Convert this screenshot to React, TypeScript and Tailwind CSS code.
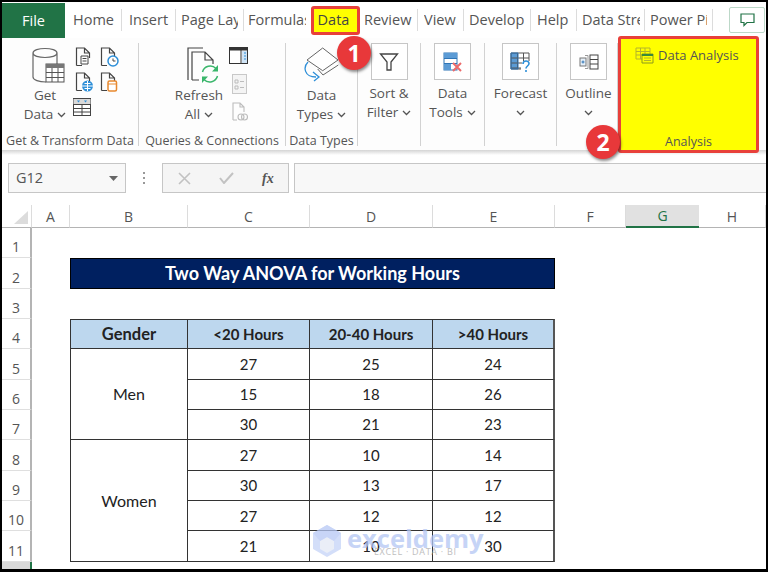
import type { ReactNode } from "react";

const Chevron = ({ className = "" }: { className?: string }) => (
  <svg width="9" height="6" viewBox="0 0 9 6" className={className} fill="none" stroke="#555" strokeWidth="1.3">
    <path d="M1 1l3.5 3.5L8 1" />
  </svg>
);

const Doc = ({ children, stroke = "#444" }: { children?: ReactNode; stroke?: string }) => (
  <svg width="19" height="20" viewBox="0 0 19 20" fill="none">
    <path d="M1.5 18.5V1h8l5 5v5M1.5 18.5H7M9.5 1v5h5" stroke={stroke} strokeWidth="1.2" />
    {children}
  </svg>
);

const GetDataIcon = () => (
  <svg width="33" height="37" viewBox="0 0 33 37" fill="none">
    <path d="M1 6c0-6 24-6 24 0v11M1 6c0 6 24 6 24 0M1 6v24c0 3 6 5 13 5" stroke="#666" strokeWidth="1.2" />
    <rect x="14" y="17" width="18" height="18" fill="#fff" stroke="#555" />
    <path d="M14 17h18v4H14z" fill="#777" />
    <path d="M14 25.500h18M14 30.500h18M20 21v14M26 21v14" stroke="#555" />
  </svg>
);

const TableIcon = () => (
  <svg width="18" height="18" viewBox="0 0 18 18" fill="none">
    <rect x=".5" y=".5" width="17" height="17" fill="#fff" stroke="#444" />
    <path d="M.5 1h17v5H.5z" fill="#d9d9d9" />
    <path d="M4 2.500h3L5.500 4.500zM11 2.500h3l-1.500 2z" fill="#2e8fd8" />
    <path d="M.5 6.500h17M.5 10.500h17M.5 14h17M9 6.500V18" stroke="#444" />
  </svg>
);

const RefreshIcon = () => (
  <svg width="33" height="37" viewBox="0 0 33 37" fill="none">
    <path d="M1 33V1h15" stroke="#444" strokeWidth="1.2" />
    <path d="M5 33V5h13l8 8v4M18 5v8h8M5 33h7" stroke="#444" strokeWidth="1.2" />
    <path d="M15.500 25A8 8 0 0 1 29 21.500" stroke="#3ab66b" strokeWidth="1.5" />
    <path d="M30.500 29A8 8 0 0 1 17 32.500" stroke="#3ab66b" strokeWidth="1.5" />
    <path d="M31 18v6.500h-6zM15 36v-6.500h6z" fill="#3ab66b" />
  </svg>
);

const DataTypesIcon = () => (
  <svg width="36" height="36" viewBox="0 0 36 36" fill="none">
    <path d="M18.700 1L34 13 18.700 23.700 3 13z" fill="#fff" stroke="#666" />
    <path d="M13.700 22l5.300 6 15.300-10" stroke="#666" />
    <path d="M4 15C-1 20 0 30 12 30" stroke="#2e8fd8" strokeWidth="1.3" />
    <path d="M9 25l6 5-5 4" stroke="#2e8fd8" strokeWidth="1.3" />
  </svg>
);

const SquareBtn = ({ children }: { children: ReactNode }) => (
  <div className="w-[37px] h-[37px] border border-[#c6c6c6] bg-white flex items-center justify-center">{children}</div>
);

const BigLabel = ({ children }: { children: ReactNode }) => (
  <div className="flex items-center justify-center gap-[4px] h-[19px] text-[13.5px] text-[#555] whitespace-nowrap">{children}</div>
);

const Group = ({ className, label, children, top = "pt-[5px]" }: { className: string; label: string; children: ReactNode; top?: string }) => (
  <div className={`flex shrink-0 ${className}`}>
    <div className="flex-1 min-w-0 flex flex-col">
      <div className={`h-[92px] ${top}`}>{children}</div>
      <div className="h-[20px] pt-[1px] text-center text-[12.5px] leading-[20px] text-[#555] whitespace-nowrap">{label}</div>
    </div>
    <div className="w-px h-[103px] mt-[5px] bg-[#d2d2d2]" />
  </div>
);

const Big = ({ icon, lines }: { icon: ReactNode; lines: ReactNode[] }) => (
  <div className="flex flex-col items-center">
    <SquareBtn>{icon}</SquareBtn>
    <div className="mt-[4px]">
      {lines.map((l, i) => (
        <BigLabel key={i}>{l}</BigLabel>
      ))}
    </div>
  </div>
);

const Sep = () => <div className="w-px h-[22px] bg-[#dcdcdc] shrink-0" />;

const Tab = ({ w, text, pl = "pl-[6px]", pr = "pr-0" }: { w: string; text: string; pl?: string; pr?: string }) => (
  <div className={`${w} ${pl} ${pr} shrink-0 text-[14.5px] text-[#555] leading-[36px] h-[36px]`}>
    <div className="overflow-hidden whitespace-nowrap">{text}</div>
  </div>
);

const ColHead = ({ children, active }: { children?: ReactNode; active?: boolean }) => (
  <div
    className={`flex items-center justify-center text-[14px] ${
      active ? "bg-[#e1e1e1] border-b-2 border-b-[#217346] text-[#217346]" : "border-r border-r-[#dcdcdc] border-b border-b-[#b4b4b4] text-[#555]"
    }`}
  >
    {children}
  </div>
);

const RowHead = ({ n }: { n: number }) => (
  <div className="flex items-end justify-center text-[14px] text-[#555] border-b border-b-[#dfdfdf] border-r-2 border-r-[#b4b4b4]">{n}</div>
);

const cell = "flex items-center justify-center font-['Lato',sans-serif] text-[#222] border-r border-b border-[#333]";

const rows: [number, number, number][] = [
  [27, 25, 24],
  [15, 18, 26],
  [30, 21, 23],
  [27, 10, 14],
  [30, 13, 17],
  [27, 12, 12],
  [21, 10, 30],
];

const Empty = () => <div />;

const App = () => {
  return (
    <div className="relative w-[768px] h-[572px] overflow-hidden bg-white border-t-2 border-l-2 border-r-2 border-b-[3px] border-black font-['Open_Sans',sans-serif] flex flex-col">
      {/* tabs */}
      <div className="h-[36px] flex items-center shrink-0">
        <div className="w-[63px] h-[35px] mt-[1px] bg-[#217346] text-white text-[14.5px] flex items-center justify-center shrink-0">File</div>
        <Tab w="w-[56px]" text="Home" pl="pl-[8px]" />
        <Sep />
        <Tab w="w-[53px]" text="Insert" pl="pl-[7px]" />
        <Sep />
        <Tab w="w-[67px]" text="Page Layout" pl="pl-[5px]" pr="pr-[5px]" />
        <Sep />
        <Tab w="w-[67px]" text="Formulas" pl="pl-[4px]" pr="pr-[5px]" />
        <div className="w-[49px] h-[29px] shrink-0 border-[3px] border-[#e8403a] rounded-[3px] bg-[#ffff00] text-[14.5px] text-[#444] flex items-center justify-center pr-[4px]">Data</div>
        <Tab w="w-[57px]" text="Review" pl="pl-[4px]" />
        <Sep />
        <Tab w="w-[45px]" text="View" pl="pl-[6px]" />
        <Sep />
        <Tab w="w-[66px]" text="Developer" pl="pl-[5px]" pr="pr-[6px]" />
        <Sep />
        <Tab w="w-[45px]" text="Help" pl="pl-[6px]" />
        <Sep />
        <Tab w="w-[67px]" text="Data Streamer" pl="pl-[5px]" pr="pr-[4px]" />
        <Sep />
        <Tab w="w-[67px]" text="Power Pivot" pl="pl-[5px]" pr="pr-[5px]" />
        <Sep />
        <div className="ml-[16px] w-[36px] h-[26px] shrink-0 border border-[#bcd8c8] rounded-[2px] flex items-center justify-center">
          <svg width="15" height="14" viewBox="0 0 15 14" fill="none" stroke="#217346" strokeWidth="1.2">
            <path d="M1 1h13v8.500H7L4 12.500V9.500H1z" />
          </svg>
        </div>
      </div>

      {/* ribbon */}
      <div className="h-[112px] flex shrink-0 bg-[#fdfdfd]">
        <Group className="w-[137px]" label="Get & Transform Data" top="pt-[9px]">
          <div className="flex">
            <div className="w-[73px] flex flex-col items-center pl-[13px]">
              <div className="ml-[6px] h-[37px]"><GetDataIcon /></div>
              <div className="mt-[2px]">
                <BigLabel>Get</BigLabel>
                <BigLabel>Data <Chevron /></BigLabel>
              </div>
            </div>
            <div className="grid grid-cols-[25px_19px] grid-rows-[25px_26px_20px]">
              <Doc><path d="M6 9h7v8H6z" fill="#fff" stroke="#444" /><path d="M7.500 11.500h4M7.500 14h4" stroke="#444" /></Doc>
              <Doc><circle cx="13" cy="14" r="5" fill="#fff" stroke="#2e8fd8" strokeWidth="1.5" /><path d="M13 11.500V14h2.500" stroke="#444" /></Doc>
              <Doc><circle cx="12.500" cy="14" r="5.500" fill="#2e8fd8" /><path d="M7 14h11M12.500 9v10M9.500 11.500h6M9.500 16.500h6" stroke="#fff" /></Doc>
              <Doc><rect x="8" y="9" width="8.500" height="10" rx="1.500" fill="#fff" stroke="#e8892f" strokeWidth="1.5" /><path d="M8 12h8" stroke="#e8892f" /></Doc>
              <div className="-ml-[2px]"><TableIcon /></div>
            </div>
          </div>
        </Group>

        <Group className="w-[147px]" label="Queries & Connections" top="pt-[9px]">
          <div className="flex">
            <div className="w-[90px] flex flex-col items-center pl-[30px]">
              <div className="ml-[8px] h-[37px]"><RefreshIcon /></div>
              <div className="mt-[2px]">
                <BigLabel>Refresh</BigLabel>
                <BigLabel>All <Chevron /></BigLabel>
              </div>
            </div>
            <div className="flex flex-col items-start">
              <svg width="20" height="18" viewBox="0 0 20 18" fill="none">
                <rect x=".5" y=".5" width="18" height="16" fill="#fff" stroke="#333" />
                <path d="M.5 1h18v2.500H.5z" fill="#333" />
                <path d="M12 3v13" stroke="#333" />
                <path d="M13 4h5v12h-5z" fill="#cfe4f6" />
                <path d="M15 6h2M15 9h2M15 12h2" stroke="#2e8fd8" />
              </svg>
              <svg className="mt-[9px] ml-[3px]" width="15" height="20" viewBox="0 0 15 20" fill="none">
                <rect x=".5" y=".5" width="14" height="19" fill="#f4f4f4" stroke="#c8c8c8" />
                <path d="M3 6h3v3H3zM3 12h3v3H3z" stroke="#bcbcbc" />
                <path d="M8 7.500h4M8 13.500h4" stroke="#bcbcbc" />
              </svg>
              <svg className="mt-[8px] ml-[3px]" width="17" height="20" viewBox="0 0 17 20" fill="none" stroke="#bcbcbc" strokeWidth="1.1">
                <path d="M1 18V1h7l4 4v5M8 1v4h4M1 18h4" />
                <circle cx="9" cy="15" r="3" />
                <circle cx="12.500" cy="15" r="3" />
              </svg>
            </div>
          </div>
        </Group>

        <Group className="w-[72px]" label="Data Types" top="pt-[9px]">
          <div className="flex flex-col items-center">
            <div className="h-[37px]"><DataTypesIcon /></div>
            <div className="mt-[2px]">
              <BigLabel>Data</BigLabel>
              <BigLabel>Types <Chevron /></BigLabel>
            </div>
          </div>
        </Group>

        <Group className="w-[63px]" label="">
          <Big
            icon={
              <svg width="20" height="20" viewBox="0 0 20 20" fill="none" stroke="#444" strokeWidth="1.3">
                <path d="M1.500 2h17l-6.500 8v8H8v-8z" />
              </svg>
            }
            lines={["Sort &", <>Filter <Chevron /></>]}
          />
        </Group>

        <Group className="w-[64px]" label="">
          <Big
            icon={
              <svg width="20" height="20" viewBox="0 0 20 20" fill="none">
                <rect x="1" y="1" width="13" height="17" fill="#fff" stroke="#2e75b6" />
                <path d="M1 1h13v5H1zM1 11h7v7H1z" fill="#5b9bd5" />
                <path d="M1 6.500h13M1 11.500h13" stroke="#2e75b6" />
                <path d="M10 11l8 8M18 11l-8 8" stroke="#ec6a6a" strokeWidth="2" />
              </svg>
            }
            lines={["Data", <>Tools <Chevron /></>]}
          />
        </Group>

        <Group className="w-[72px]" label="">
          <Big
            icon={
              <svg width="22" height="20" viewBox="0 0 22 20" fill="none">
                <path d="M1 1h7v16H1z" fill="#5b9bd5" />
                <path d="M1 1h18v8M1 6h18M1 11h11M1 16h10M1 1v16h10M7.500 1v16M13.500 1v8" stroke="#555" />
                <path d="M1 1h7v16H1z" stroke="#2e75b6" />
                <path d="M13 12c0-4 6-4 6-.5 0 2.500-3 2.500-3 5" stroke="#2e8fd8" strokeWidth="1.6" />
                <path d="M16 18v2" stroke="#2e8fd8" strokeWidth="1.6" />
              </svg>
            }
            lines={["Forecast", <Chevron />]}
          />
        </Group>

        <Group className="w-[61px]" label="" top="pt-[5px] pl-[3px]">
          <Big
            icon={
              <svg width="20" height="16" viewBox="0 0 20 16" fill="none" stroke="#444">
                <rect x="1" y="4" width="6" height="8" fill="#e6f0f9" stroke="#777" />
                <path d="M2.500 8h3M4 6.500v3" stroke="#2e75b6" />
                <path d="M6 1.500h3v13H6" stroke="#999" />
                <rect x="11" y="1" width="8" height="14" />
                <path d="M11 5.500h8M11 10h8" />
              </svg>
            }
            lines={["Outline", <Chevron />]}
          />
        </Group>

        {/* highlighted Analysis group, spills a little over the tabs and the shadow */}
        <div className="relative z-10 w-[141px] h-[117px] -mt-[2px] shrink-0 bg-[#ffff00] border-[3px] border-[#e8403a] rounded-[3px] flex flex-col">
          <div className="flex gap-[4px] pl-[14px] pt-[8px] h-[92px] items-start">
            <svg width="19" height="17" viewBox="0 0 19 17" fill="none" stroke="#b5b52a">
              <path d="M1 1h14v11H1zM1 4.500h14M1 8h14M5.500 1v11M10 1v11" />
              <path d="M7 7h11v9H7z" fill="#ffff00" stroke="#8c9a1c" />
              <path d="M7 8h11" stroke="#3b8a3b" strokeWidth="2" />
              <path d="M9 11h7M9 13.500h7" />
            </svg>
            <span className="text-[13px] leading-[17px] text-[#555] whitespace-nowrap">Data Analysis</span>
          </div>
          <div className="text-center text-[12.5px] leading-[16px] text-[#555] mt-[5px]">Analysis</div>
        </div>
      </div>

      {/* formula bar */}
      <div className="h-[55px] shrink-0 bg-white flex flex-col">
        <div className="h-[5px] bg-gradient-to-b from-[#d4d4d4] to-white" />
        <div className="mt-[8px] h-[30px] flex items-stretch">
          <div className="ml-[6px] w-[118px] border border-[#c6c6c6] bg-[#f8f8f8] flex items-center justify-between pl-[7px] pr-[7px] text-[14.5px] text-[#555]">
            G12
            <svg width="9" height="5" viewBox="0 0 9 5"><path d="M0 0h9L4.500 5z" fill="#666" /></svg>
          </div>
          <div className="w-[36px] flex flex-col items-center justify-center gap-[3px]">
            <i className="w-[2px] h-[2px] bg-[#999]" />
            <i className="w-[2px] h-[2px] bg-[#999]" />
            <i className="w-[2px] h-[2px] bg-[#999]" />
          </div>
          <div className="w-[127px] border border-[#c6c6c6] bg-[#f5f5f5] flex items-center">
            <svg className="ml-[15px]" width="13" height="13" viewBox="0 0 13 13" stroke="#c2c2c2" strokeWidth="1.6"><path d="M1 1l11 11M12 1L1 12" /></svg>
            <svg className="ml-[28px]" width="15" height="12" viewBox="0 0 15 12" fill="none" stroke="#c2c2c2" strokeWidth="2"><path d="M1 6l4 5 9-10" /></svg>
            <span className="ml-[28px] text-[14px] italic font-bold text-[#555] font-['Liberation_Serif',serif]">fx</span>
          </div>
          <div className="ml-[5px] flex-1 border-y border-l border-[#c6c6c6] bg-[#f8f8f8]" />
        </div>
        <div className="flex-1" />
      </div>

      {/* sheet */}
      <div className="flex-1 grid grid-cols-[30px_38px_118px_122px_123px_122px_71px_73px_67px] grid-rows-[23px_repeat(11,30.35px)_1fr]">
        <div className="relative border-r border-r-[#dcdcdc] border-b border-b-[#b4b4b4]">
          <svg className="absolute right-[3px] bottom-[3px]" width="14" height="13" viewBox="0 0 14 13"><path d="M14 0v13H0z" fill="#dcdcdc" /></svg>
        </div>
        {["A", "B", "C", "D", "E", "F"].map((c) => (
          <ColHead key={c}>{c}</ColHead>
        ))}
        <ColHead active>G</ColHead>
        <ColHead>H</ColHead>

        <RowHead n={1} />
        <Empty /><Empty /><Empty /><Empty /><Empty /><Empty /><Empty /><Empty />

        <RowHead n={2} />
        <Empty />
        <div className="col-span-4 flex items-center justify-center bg-[#002060] border border-black font-['Lato',sans-serif] font-bold text-[18px] text-white">
          Two Way ANOVA for Working Hours
        </div>
        <Empty /><Empty /><Empty />

        <RowHead n={3} />
        <Empty /><Empty /><Empty /><Empty /><Empty /><Empty /><Empty /><Empty />

        <RowHead n={4} />
        <Empty />
        <div className={`${cell} bg-[#bdd7ee] font-bold border-t border-l text-[16.5px]`}>Gender</div>
        {["<20 Hours", "20-40 Hours", ">40 Hours"].map((h, i) => (
          <div key={h} className={`${cell} bg-[#bdd7ee] font-bold border-t text-[15px] ${i === 2 ? "border-r-2 border-r-[#555]" : ""}`}>{h}</div>
        ))}
        <Empty /><Empty /><Empty />

        {rows.map(([c, d, e], i) => (
          <div key={i} className="contents">
            <RowHead n={i + 5} />
            <Empty />
            {i === 0 && <div className={`${cell} row-span-3 border-l text-[16px]`}>Men</div>}
            {i === 3 && <div className={`${cell} row-span-4 border-l text-[16px]`}>Women</div>}
            <div className={`${cell} text-[15px]`}>{c}</div>
            <div className={`${cell} text-[15px]`}>{d}</div>
            <div className={`${cell} text-[15px] border-r-2 border-r-[#555]`}>{e}</div>
            <Empty /><Empty /><Empty />
          </div>
        ))}

        <div className="bg-[#d9d9d9] border-r-2 border-r-[#217346]" />
      </div>

      {/* step badges */}
      <div className="absolute left-[335px] top-[34px] w-[34px] h-[34px] rounded-full bg-[#e8383a] shadow-[1px_2px_3px_rgba(0,0,0,0.45)] flex items-center justify-center text-white font-bold text-[23px]">1</div>
      <div className="absolute left-[584px] top-[123px] w-[34px] h-[34px] rounded-full bg-[#e8383a] shadow-[1px_2px_3px_rgba(0,0,0,0.45)] flex items-center justify-center text-white font-bold text-[23px] z-20">2</div>

      {/* watermark */}
      <div className="absolute left-[311px] top-[523px] flex items-start gap-[6px] opacity-75 pointer-events-none">
        <svg width="28" height="32" viewBox="0 0 28 32">
          <path d="M14 0l14 8v16l-14 8L0 24V8z" fill="#c5d3f7" />
          <path d="M14 12l7 4v8l-7 4-7-4v-8z" fill="#e4e9f5" />
          <path d="M14 0l14 8-7 8-7-4-7 4-7-8z" fill="#b6c8f5" />
        </svg>
        <div className="flex flex-col items-center">
          <span className="font-bold text-[25.5px] leading-[26px] text-[#b4c6f4]">exceldemy</span>
          <span className="text-[9px] leading-[10px] -mt-[4px] tracking-[0.7px] text-[#aaa]">EXCEL · DATA · BI</span>
        </div>
      </div>
    </div>
  );
};

export default App;
